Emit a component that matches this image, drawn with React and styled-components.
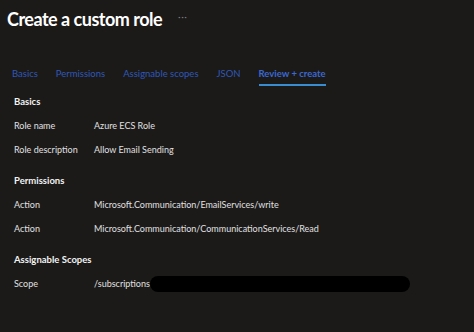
import styled, { createGlobalStyle } from 'styled-components';

const GlobalStyle = createGlobalStyle`
	html, body {
		margin: 0;
		padding: 0;
		background: #1b1a19;
	}
	body {
		font-family: 'Lato', 'Open Sans', sans-serif;
		color: #e6e6e6;
	}
`;

const Page = styled.div`
	width: 474px;
	height: 332px;
	background: #1b1a19;
	overflow: hidden;
`;

const Header = styled.div`
	display: flex;
	align-items: center;
	padding: 7px 0 0 7px;
	height: 24px;
`;

const Title = styled.h1`
	margin: 0;
	font-size: 18px;
	font-weight: 700;
	letter-spacing: -0.5px;
	color: #ffffff;
`;

const More = styled.span`
	margin-left: 16px;
	font-size: 10px;
	color: #7c7c7c;
	letter-spacing: 0.5px;
	position: relative;
	top: -3px;
`;

const Tabs = styled.div`
	display: flex;
	gap: 18px;
	margin-top: 36px;
	padding-left: 12px;
`;

const Tab = styled.div`
	font-size: 9.5px;
	line-height: 13px;
	padding-bottom: 4px;
	border-bottom: 2px solid ${(p) => (p.$active ? '#3a8cd0' : 'transparent')};
	font-weight: ${(p) => (p.$active ? 700 : 400)};
	color: ${(p) => (p.$active ? '#3b68d0' : '#2f58b8')};
`;

const Body = styled.div`
	padding: 4px 0 0 14px;
`;

const Section = styled.div`
	font-size: 9.5px;
	font-weight: 700;
	color: #f2f2f2;
	height: 24px;
	line-height: 24px;
	margin-top: ${(p) => (p.$first ? 0 : 7)}px;
`;

const Row = styled.div`
	display: grid;
	grid-template-columns: 80px auto;
	align-items: center;
	font-size: 9px;
	height: 24px;
	line-height: 24px;
	color: #e0e0e0;
`;

const Value = styled.span`
	display: flex;
	align-items: center;
`;

const Redact = styled.span`
	display: inline-block;
	width: 260px;
	height: 16px;
	background: #000;
	border-radius: 8px;
`;

export default function App() {
	return (
		<Page>
			<GlobalStyle />
			<Header>
				<Title>Create a custom role</Title>
				<More>···</More>
			</Header>
			<Tabs>
				<Tab>Basics</Tab>
				<Tab>Permissions</Tab>
				<Tab>Assignable scopes</Tab>
				<Tab>JSON</Tab>
				<Tab $active>Review + create</Tab>
			</Tabs>
			<Body>
				<Section $first>Basics</Section>
				<Row>
					<span>Role name</span>
					<span>Azure ECS Role</span>
				</Row>
				<Row>
					<span>Role description</span>
					<span>Allow Email Sending</span>
				</Row>
				<Section>Permissions</Section>
				<Row>
					<span>Action</span>
					<span>Microsoft.Communication/EmailServices/write</span>
				</Row>
				<Row>
					<span>Action</span>
					<span>Microsoft.Communication/CommunicationServices/Read</span>
				</Row>
				<Section>Assignable Scopes</Section>
				<Row>
					<span>Scope</span>
					<Value>
						/subscriptions
						<Redact />
					</Value>
				</Row>
			</Body>
		</Page>
	);
}
